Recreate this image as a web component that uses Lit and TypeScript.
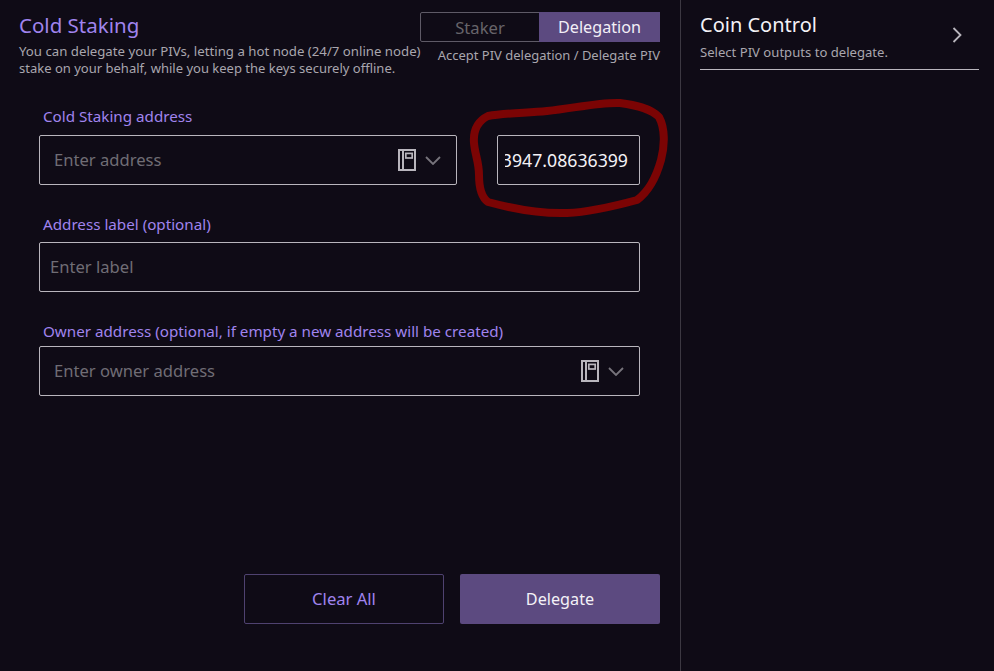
import { LitElement, html, css, svg } from "lit";
import { customElement } from "lit/decorators.js";

const book = svg`<svg class="book" width="18" height="22" viewBox="0 0 18 22" fill="none" stroke="#b9b6bd" stroke-width="2"><rect x="1" y="1" width="16" height="20"/><path d="M5 1v20"/><rect x="7.8" y="4.4" width="6.4" height="4.6" stroke-width="1.7"/></svg>`;
const chev = svg`<svg width="16" height="9" viewBox="0 0 16 9" fill="none" stroke="#77747c" stroke-width="1.8"><path d="M1 1l7 7 7-7"/></svg>`;

@customElement("app-root")
export class AppRoot extends LitElement {
  static styles = css`
    :host {
      display: flex;
      width: 994px;
      height: 100vh;
      min-height: 671px;
      position: relative;
      overflow: hidden;
      background: #0f0b16;
      font-family: "Noto Sans", "DejaVu Sans", sans-serif;
      color: #b9b6bd;
    }
    .left {
      box-sizing: border-box;
      width: 681px;
      flex: none;
      border-right: 1px solid #3c3842;
      padding: 12px 20px 47px 19px;
      display: flex;
      flex-direction: column;
    }
    .head { display: flex; justify-content: space-between; height: 64px; }
    .intro { flex: 1; width: 0; min-width: 0; }
    .title { font-size: 20.5px; line-height: 26px; color: #a084ee; }
    .desc { margin-top: 5px; color: #a9a6ae; white-space: nowrap; }
    .l1 { font-size: 13.22px; line-height: 17px; }
    .l2 { font-size: 13.03px; line-height: 17px; }
    .side { flex: none; display: flex; flex-direction: column; align-items: flex-end; }
    .toggle {
      display: flex;
      width: 240px;
      height: 30px;
      box-sizing: border-box;
      border: 1px solid #5e5a66;
      border-radius: 2px;
    }
    .toggle span { display: flex; align-items: center; justify-content: center; }
    .off { flex: 1; color: #67646a; font-size: 16.6px; }
    .on { width: 121px; background: #5c4a80; color: #f2eff7; margin: -1px -1px -1px 0; font-size: 16.2px; }
    .hint { font-size: 12.98px; line-height: 16px; margin-top: 5px; color: #a9a6ae; white-space: nowrap; }
    .form { margin-left: 20px; width: 601px; margin-top: 31px; display: flex; flex-direction: column; }
    label { display: block; font-size: 15.2px; line-height: 18px; color: #a084ee; margin-left: 4px; height: 20px; }
    .box {
      box-sizing: border-box;
      height: 50px;
      border: 1px solid #b9b6bd;
      border-radius: 2px;
      display: flex;
      align-items: center;
      font-size: 16.6px;
      color: #706d75;
      padding: 0 15px 0 14px;
    }
    .row { display: flex; justify-content: space-between; align-items: flex-end; }
    .addr { width: 418px; margin-top: 8px; }
    .grow { flex: 1; margin-top: -2px; }
    .box svg { flex: none; }
    .book { margin-right: 9px; }
    .amt {
      width: 143px;
      color: #f4f2f7;
      padding: 0 11px 0 7px;
    }
    .clip { flex: 1; display: flex; justify-content: flex-end; overflow: hidden; font-size: 17.7px; margin-top: -1px; }
    .clip span { flex: none; }
    .f2 { margin-top: 30px; }
    .f2 .box { margin-top: 7px; padding-left: 10px; }
    .f3 { margin-top: 30px; }
    .f3 .box { margin-top: 4px; }
    .actions { margin-top: auto; display: flex; justify-content: flex-end; gap: 16px; }
    .btn {
      box-sizing: border-box;
      width: 200px;
      height: 50px;
      border-radius: 2px;
      display: flex;
      align-items: center;
      justify-content: center;
      font-size: 16.6px;
    }
    .ghost { border: 1px solid #4f4270; color: #a084ee; padding-bottom: 2px; }
    .solid { background: #5c4a80; color: #f4f2f7; font-size: 16.2px; }
    .right { flex: 1; padding: 12px 15px 0 19px; }
    .cc {
      display: flex;
      align-items: flex-start;
      justify-content: space-between;
      height: 58px;
      border-bottom: 1px solid #b9b6bd;
      box-sizing: border-box;
      padding-right: 17px;
    }
    .cct { font-size: 20px; line-height: 26px; color: #f4f2f7; }
    .ccs { font-size: 13.1px; line-height: 16px; margin-top: 6px; color: #a9a6ae; }
    .cc svg { margin-top: 15px; }
    .ink { position: absolute; left: 0; top: 0; pointer-events: none; }
  `;

  render() {
    return html`
      <section class="left">
        <div class="head">
          <div class="intro">
            <div class="title">Cold Staking</div>
            <div class="desc">
              <div class="l1">You can delegate your PIVs, letting a hot node (24/7 online node)</div>
              <div class="l2">stake on your behalf, while you keep the keys securely offline.</div>
            </div>
          </div>
          <div class="side">
            <div class="toggle"><span class="off">Staker</span><span class="on">Delegation</span></div>
            <div class="hint">Accept PIV delegation / Delegate PIV</div>
          </div>
        </div>
        <div class="form">
          <label>Cold Staking address</label>
          <div class="row">
            <div class="box addr"><span class="grow">Enter address</span>${book}${chev}</div>
            <div class="box amt"><div class="clip"><span>3947.08636399</span></div></div>
          </div>
          <div class="f2">
            <label>Address label (optional)</label>
            <div class="box"><span class="grow">Enter label</span></div>
          </div>
          <div class="f3">
            <label>Owner address (optional, if empty a new address will be created)</label>
            <div class="box"><span class="grow">Enter owner address</span>${book}${chev}</div>
          </div>
        </div>
        <div class="actions">
          <div class="btn ghost">Clear All</div>
          <div class="btn solid">Delegate</div>
        </div>
      </section>
      <aside class="right">
        <div class="cc">
          <div>
            <div class="cct">Coin Control</div>
            <div class="ccs">Select PIV outputs to delegate.</div>
          </div>
          <svg width="10" height="16" viewBox="0 0 10 16" fill="none" stroke="#b9b6bd" stroke-width="1.8"><path d="M1.5 1l7 7-7 7"/></svg>
        </div>
      </aside>
      <svg class="ink" width="994" height="671" fill="none" stroke="#7b0404" stroke-width="8" stroke-linecap="round" stroke-linejoin="round">
        <path d="M620 103C600 102 575 108 547 111C525 113 505 113 488 116C478 121 473 130 474 143C475 155 479 162 479 175C479 188 481 197 488 202C510 208 540 214 567 213C590 212 615 206 637 200C648 192 656 178 661 160C665 145 665 128 659 117C650 108 635 105 620 103Z"/>
      </svg>
    `;
  }
}
